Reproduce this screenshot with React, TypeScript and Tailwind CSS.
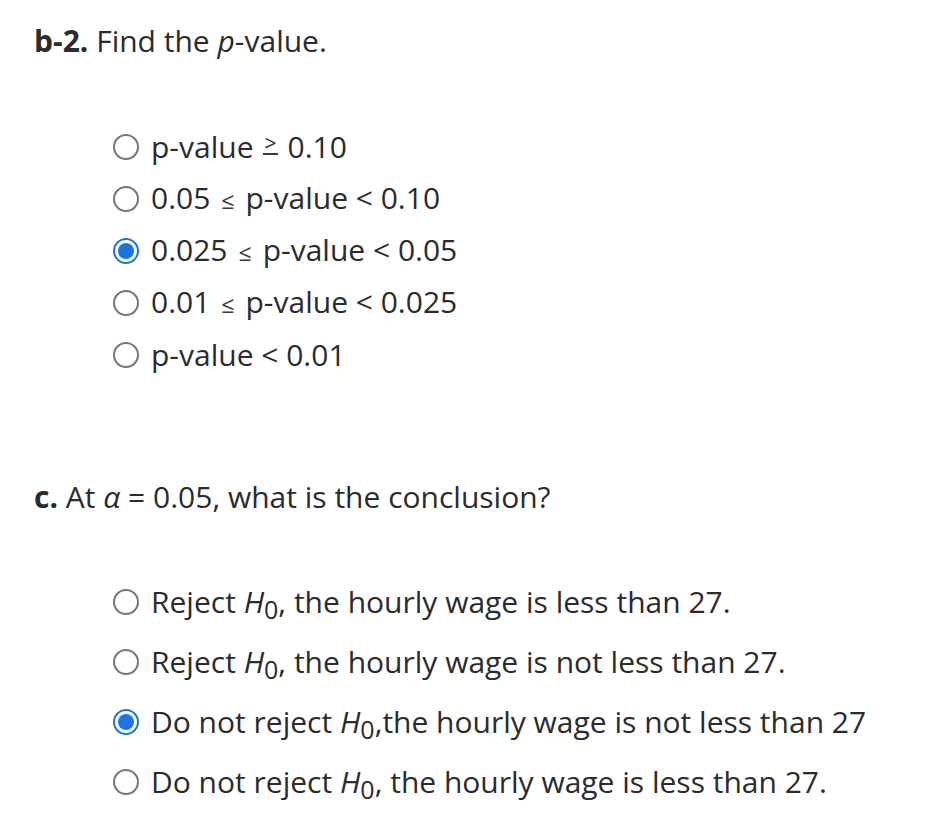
import React from 'react'

const font = { fontFamily: '"Open Sans", "Liberation Sans", sans-serif' }

function Radio({ checked }: { checked?: boolean }) {
  if (checked) {
    return (
      <span className="flex h-[26px] w-[26px] shrink-0 items-center justify-center rounded-full border-2 border-[#1a73e8] bg-white">
        <span className="h-[16px] w-[16px] rounded-full bg-[#1a73e8]" />
      </span>
    )
  }
  return <span className="h-[26px] w-[26px] shrink-0 rounded-full border-2 border-[#767676] bg-white" />
}

function Le() {
  return <span className="mx-[11px] text-[23px] text-[#3a3a3a]">≤</span>
}

function H0() {
  return (
    <span>
      <i>H</i>
      <span className="relative top-[6px] text-[25px]">0</span>
    </span>
  )
}

function Option({ checked, h, children }: { checked?: boolean; h: string; children: React.ReactNode }) {
  return (
    <label className={`flex items-center gap-[12px] ${h}`}>
      <Radio checked={checked} />
      <span className="whitespace-nowrap">{children}</span>
    </label>
  )
}

export default function App() {
  return (
    <div className="min-h-[830px] w-[926px] bg-white pl-[34px] pt-[24px] text-[30px] leading-[34px] text-[#2b2b2b]" style={font}>
      <div>
        <b>b-2.</b> Find the <i>p</i>-value.
      </div>

      <div className="mt-[63px] pl-[79px]">
        <Option h="h-[52px]">
          p-value
          <span className="relative -top-[4px] mx-[8px] inline-flex w-[18px] flex-col items-center align-middle text-[21px] leading-[15px]">
            <span>&gt;</span>
            <span className="mt-[2px] h-[2px] w-[15px] bg-[#3a3a3a]" />
          </span>
          0.10
        </Option>
        <Option h="h-[52px]">
          0.05<Le />p-value &lt; 0.10
        </Option>
        <Option h="h-[52px]" checked>
          0.025<Le />p-value &lt; 0.05
        </Option>
        <Option h="h-[52px]">
          0.01<Le />p-value &lt; 0.025
        </Option>
        <Option h="h-[52px]">p-value &lt; 0.01</Option>
      </div>

      <div className="mt-[99px]">
        <b>c.</b> At <i>α</i> = 0.05, what is the conclusion?
      </div>

      <div className="mt-[58px] pl-[79px]">
        <Option h="h-[60px]">
          Reject <H0 />, the hourly wage is less than 27.
        </Option>
        <Option h="h-[60px]">
          Reject <H0 />, the hourly wage is not less than 27.
        </Option>
        <Option h="h-[60px]" checked>
          Do not reject <H0 />,the hourly wage is not less than 27
        </Option>
        <Option h="h-[60px]">
          Do not reject <H0 />, the hourly wage is less than 27.
        </Option>
      </div>
    </div>
  )
}
